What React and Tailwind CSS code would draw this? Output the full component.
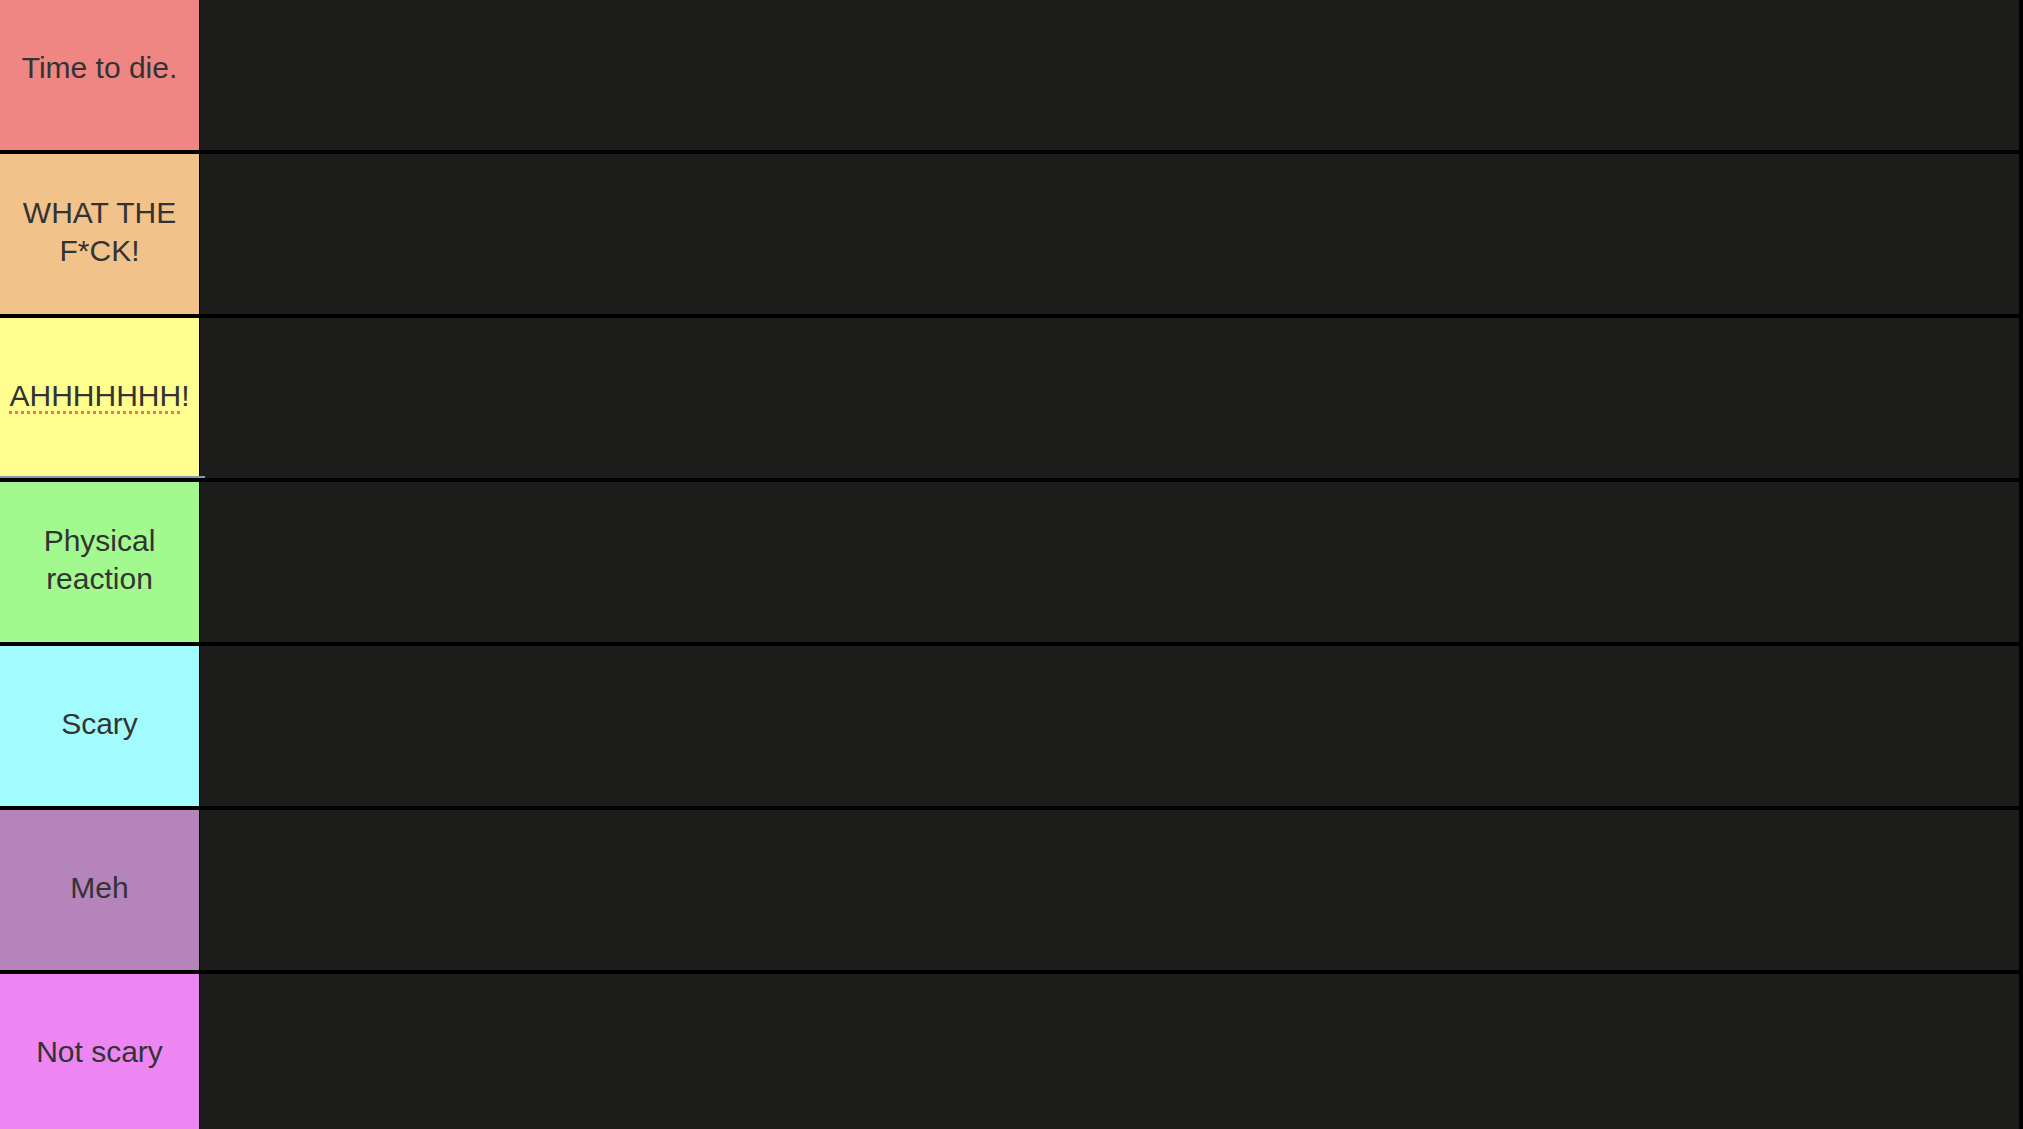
import React from 'react';

const tiers = [
    { label: 'Time to die.', color: 'bg-[#ef8683]' },
    { label: 'WHAT THE F*CK!', color: 'bg-[#f2c28b]' },
    { label: 'AHHHHHHH!', color: 'bg-[#fffe8e]', misspelled: true },
    { label: 'Physical reaction', color: 'bg-[#a2fa8f]' },
    { label: 'Scary', color: 'bg-[#a2fbfd]' },
    { label: 'Meh', color: 'bg-[#b584ba]' },
    { label: 'Not scary', color: 'bg-[#ed86f3]' },
];

const TierRow = ({ tier }) => {
    return (
        <div className="relative flex h-[160px] gap-px bg-black">
            <div className={`${tier.color} w-[199px] shrink-0 flex items-center justify-center px-1 pb-1 text-center text-[30px] leading-[38px] text-[#333]`}>
                {tier.misspelled ? (
                    <span>
                        <span className="underline decoration-dotted decoration-[#e8735f] decoration-[3px] underline-offset-[5px]">AHHHHHHH</span>!
                    </span>
                ) : (
                    tier.label
                )}
            </div>
            <div className="flex-1 bg-[#1c1c1b]" />
            {tier.misspelled && (
                <div className="absolute left-0 bottom-0 h-[2px] w-[205px] bg-[#7d9bb3]" />
            )}
        </div>
    );
};

const App = () => {
    return (
        <div className="h-[1129px] w-full overflow-hidden bg-black font-['Liberation_Sans',Arial,sans-serif]">
            <div className="-mt-[10px] flex flex-col gap-1 pr-1">
                {tiers.map((tier) => (
                    <TierRow key={tier.label} tier={tier} />
                ))}
            </div>
        </div>
    );
};

export default App;
